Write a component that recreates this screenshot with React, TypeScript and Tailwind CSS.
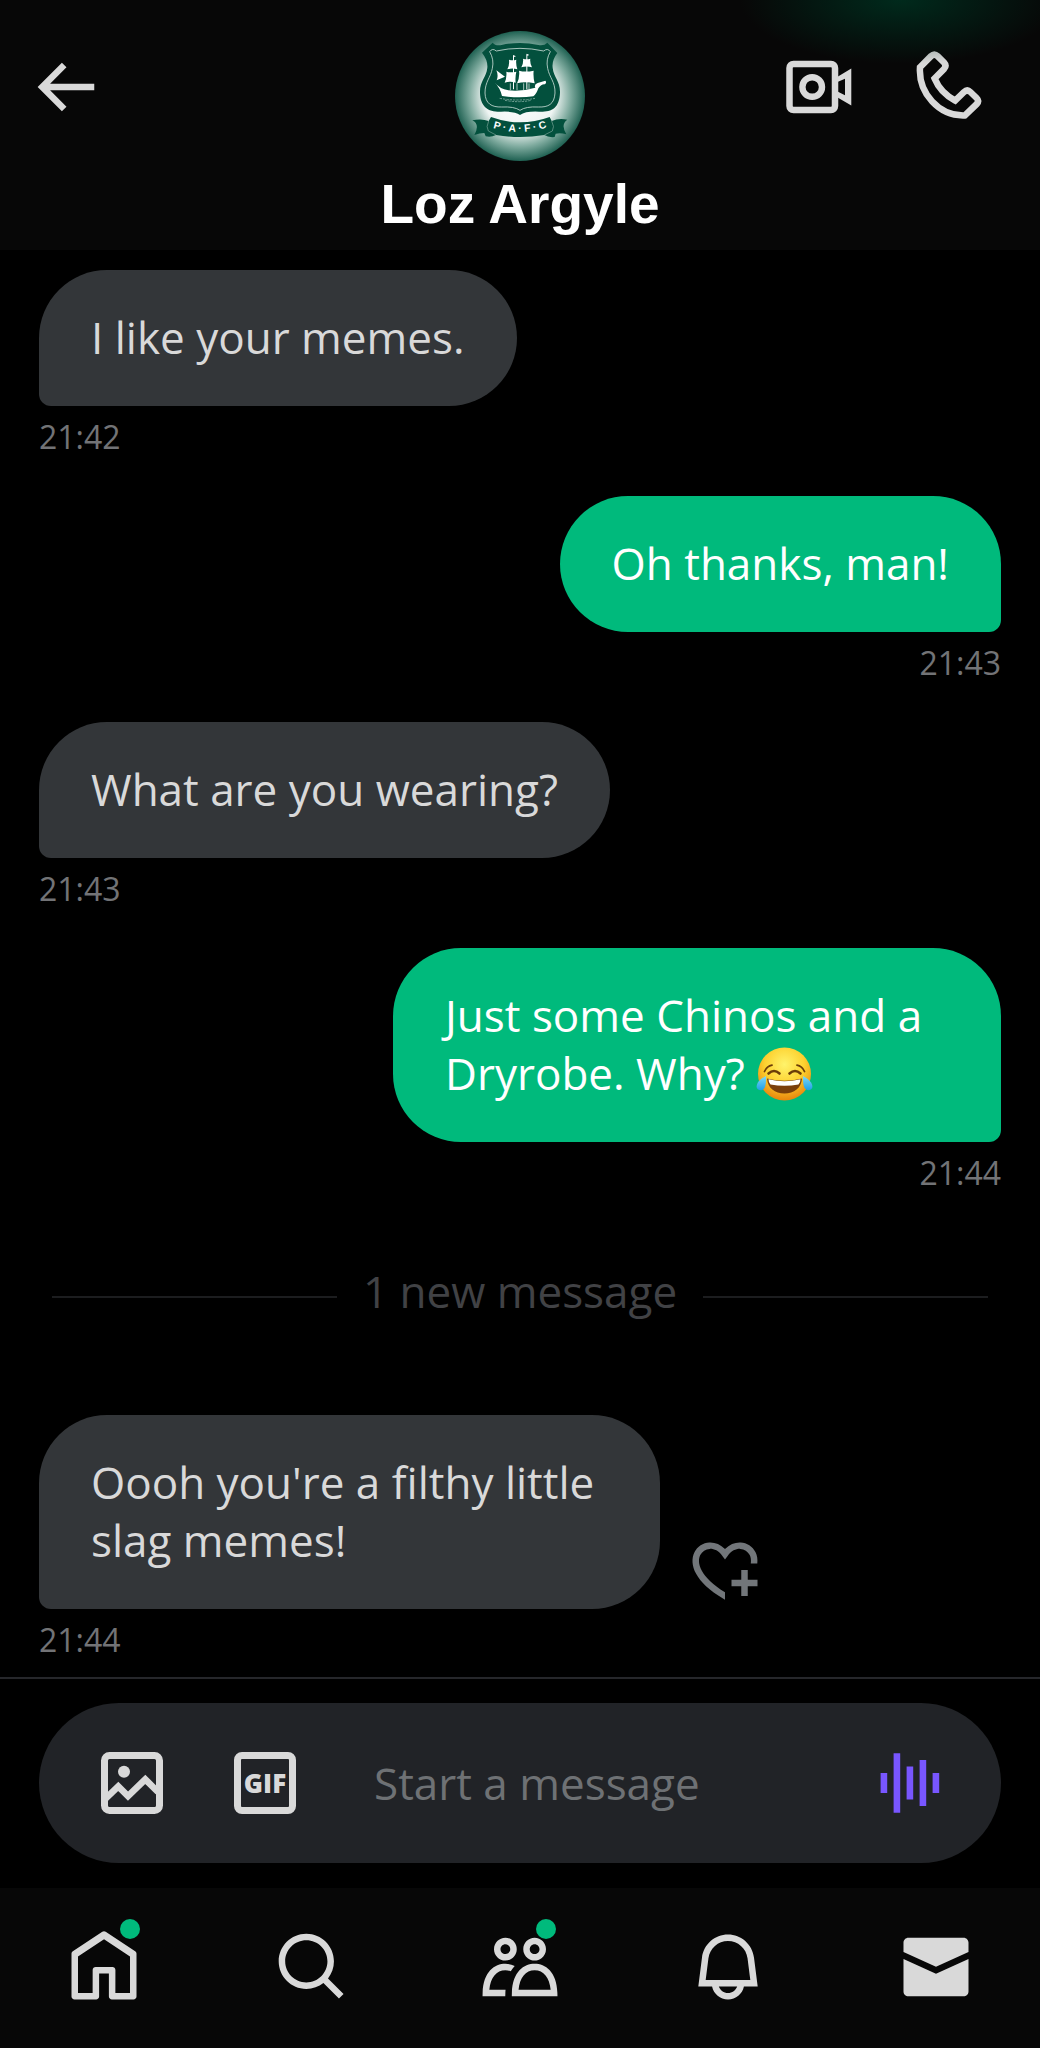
import type { ReactNode } from "react";

type Message = {
  id: number;
  mine: boolean;
  time: string;
  body: ReactNode;
  canReact?: boolean;
};

const BACK =
  "M7.414 13l5.043 5.04-1.414 1.42L3.586 12l7.457-7.46 1.414 1.42L7.414 11H21v2H7.414z";
const HEART_PLUS =
  "M17 12v3h-2.998v2H17v3h2v-3h3.001v-2H19v-3h-2zm-5 6.839c-3.871-2.34-6.053-4.639-7.127-6.609-1.112-2.04-1.031-3.7-.479-4.82.561-1.13 1.667-1.84 2.91-1.91 1.222-.06 2.68.51 3.892 2.16l.806 1.09.805-1.09c1.211-1.65 2.668-2.22 3.89-2.16 1.242.07 2.347.78 2.908 1.91.334.677.49 1.554.321 2.59h2.011c.153-1.283-.039-2.469-.539-3.48-.887-1.79-2.647-2.91-4.601-3.01-1.65-.09-3.367.56-4.796 2.01-1.43-1.45-3.147-2.1-4.798-2.01-1.954.1-3.714 1.22-4.601 3.01-.896 1.81-.846 4.17.514 6.67 1.353 2.48 4.003 5.12 8.382 7.67l.502.299v-2.32z";
const HOME =
  "M21.591 7.146L12.52 1.157c-.316-.21-.724-.21-1.04 0l-9.071 5.99c-.26.173-.409.456-.409.757v13.183c0 .502.418.913.929.913h6.638c.511 0 .929-.41.929-.913v-7.075h3.008v7.075c0 .502.418.913.929.913h6.639c.51 0 .928-.41.928-.913V7.904c0-.301-.158-.584-.408-.758zM20 20l-4.5.01.011-7.097c0-.502-.418-.913-.928-.913H9.44c-.511 0-.929.41-.929.913L8.5 20H4V8.773l8.011-5.342L20 8.764z";
const SEARCH =
  "M10.25 3.75c-3.59 0-6.5 2.91-6.5 6.5s2.91 6.5 6.5 6.5c1.795 0 3.419-.726 4.596-1.904 1.178-1.177 1.904-2.801 1.904-4.596 0-3.59-2.91-6.5-6.5-6.5zm-8.5 6.5c0-4.694 3.806-8.5 8.5-8.5s8.5 3.806 8.5 8.5c0 1.986-.682 3.815-1.824 5.262l4.781 4.781-1.414 1.414-4.781-4.781c-1.447 1.142-3.276 1.824-5.262 1.824-4.694 0-8.5-3.806-8.5-8.5z";
const PEOPLE =
  "M7.501 19.917L7.471 21H.472l.029-1.027c.184-6.618 3.736-8.977 7-8.977.963 0 1.95.212 2.87.672-.444.478-.851 1.03-1.212 1.656-.507-.204-1.054-.329-1.658-.329-2.767 0-4.57 2.223-4.938 6.004H7.56c-.023.302-.05.599-.059.918zm15.998.056L23.528 21H9.472l.029-1.027c.184-6.618 3.736-8.977 7-8.977s6.816 2.358 7 8.977zM21.437 19c-.367-3.781-2.17-6.004-4.938-6.004s-4.57 2.223-4.938 6.004h9.875zm-4.938-9c-.799 0-1.527-.279-2.116-.73-.836-.64-1.384-1.638-1.384-2.77 0-1.93 1.567-3.5 3.5-3.5s3.5 1.57 3.5 3.5c0 1.132-.548 2.13-1.384 2.77-.589.451-1.317.73-2.116.73zm-1.5-3.5c0 .827.673 1.5 1.5 1.5s1.5-.673 1.5-1.5-.673-1.5-1.5-1.5-1.5.673-1.5 1.5zM7.5 3C9.433 3 11 4.57 11 6.5S9.433 10 7.5 10 4 8.43 4 6.5 5.567 3 7.5 3zm0 2C6.673 5 6 5.673 6 6.5S6.673 8 7.5 8 9 7.327 9 6.5 8.327 5 7.5 5z";
const BELL =
  "M19.993 9.042C19.48 5.017 16.054 2 11.996 2s-7.49 3.021-7.999 7.051L2.866 18H7.1c.463 2.282 2.481 4 4.9 4s4.437-1.718 4.9-4h4.236l-1.143-8.958zM12 20c-1.306 0-2.417-.835-2.829-2h5.658c-.412 1.165-1.523 2-2.829 2zm-6.866-4l.847-6.698C6.364 6.272 8.941 4 11.996 4s5.627 2.268 6.013 5.295L18.864 16H5.134z";
const MAIL =
  "M1.998 4.499c0-.828.671-1.499 1.5-1.499h17c.828 0 1.5.671 1.5 1.499v2.858l-10 4.545-10-4.547V4.499zm0 5.053V19.5c0 .828.671 1.5 1.5 1.5h17c.828 0 1.5-.672 1.5-1.5V9.554l-10 4.545-10-4.547z";

const NAV = [
  { label: "Home", path: HOME, dot: true },
  { label: "Search", path: SEARCH, dot: false },
  { label: "Communities", path: PEOPLE, dot: true },
  { label: "Notifications", path: BELL, dot: false },
  { label: "Messages", path: MAIL, dot: false },
];

function Icon({ path }: { path: string }) {
  return (
    <svg viewBox="0 0 24 24" className="size-[78px] shrink-0" fill="currentColor" aria-hidden="true">
      <path d={path} />
    </svg>
  );
}

function VideoIcon() {
  return (
    <svg viewBox="0 -3 66 57" className="h-[57px] w-[66px]" fill="none" stroke="currentColor" aria-hidden="true">
      <rect x="3.5" y="4" width="45.5" height="46" rx="4" strokeWidth="6.5" />
      <circle cx="26.2" cy="27" r="9.8" strokeWidth="6.4" />
      <path
        d="M52 16.4 65.3 8.6v37L52 37.8v-6l7 3.5V18.8l-7 3z"
        fill="currentColor"
        stroke="none"
      />
    </svg>
  );
}

function PhoneIcon() {
  return (
    <svg viewBox="0 0 66 70" className="h-[70px] w-[66px]" fill="none" stroke="currentColor" aria-hidden="true">
      <path
        d="M4 17.2 15 6.1Q18.3 3 21.6 6.1L28 12.5Q31 15.8 28 19L18.6 28.6Q24.5 43 39.2 50.6L48 42Q51.2 39 54.4 42L60.6 48Q63.6 51 60.6 54.2L49 65.4C23 66.5 2.2 43 4 17.2Z"
        strokeWidth="6.5"
      />
    </svg>
  );
}

function PictureIcon() {
  return (
    <svg viewBox="0 0 62 62" className="size-[62px]" fill="none" stroke="currentColor" aria-hidden="true">
      <rect x="3.5" y="3.5" width="55" height="55" rx="5" strokeWidth="7" />
      <circle cx="23" cy="19.7" r="6" fill="currentColor" stroke="none" />
      <path d="M4 47.2 17.3 34.3 27 44 44.3 27.3 57 40" strokeWidth="6.6" />
    </svg>
  );
}

function VoiceIcon() {
  return (
    <svg viewBox="0 0 60 60" className="size-[60px]" fill="currentColor" aria-hidden="true">
      <path d="M.6 20h6.6v20H.6zM13.6.3h6.6v59.4h-6.6zM26.6 13.5h6.6v33h-6.6zM39.6 7h6.6v46h-6.6zM52.6 20h6.6v20h-6.6z" />
    </svg>
  );
}

function JoyEmoji() {
  return (
    <svg
      viewBox="0 0 57 54"
      className="inline-block h-[54px] w-[57px] align-[-11px]"
      role="img"
      aria-label="face with tears of joy"
    >
      <defs>
        <radialGradient id="joy-face" cx="50%" cy="32%" r="68%">
          <stop offset="0" stopColor="#fff36b" />
          <stop offset=".55" stopColor="#fdd12f" />
          <stop offset="1" stopColor="#e8850c" />
        </radialGradient>
        <linearGradient id="joy-tear" x1="0" y1="0" x2="0" y2="1">
          <stop offset="0" stopColor="#7fd8f7" />
          <stop offset="1" stopColor="#1f9fe6" />
        </linearGradient>
      </defs>
      <circle cx="28.5" cy="27" r="26.5" fill="url(#joy-face)" />
      <g fill="none" stroke="#6b3d08" strokeLinecap="round">
        <path d="M8.5 24.5Q11 19 16 18.2M48.5 24.5Q46 19 41 18.2" strokeWidth="1.8" />
        <path d="M12.5 26.5Q18 21.5 23.5 26.5M33.5 26.5Q39 21.5 44.5 26.5" strokeWidth="2.6" />
      </g>
      <path d="M11 31.5Q28.5 36 46 31.5C45.5 41 38 46.5 28.5 46.5S11.500 41 11 31.500Z" fill="#7a3f0b" />
      <path d="M12.5 32.2Q28.5 36.5 44.5 32.2Q44.5 36 42.5 37.5Q28.5 40 14.5 37.5Q12.5 36 12.5 32.2Z" fill="#fff" />
      <path d="M10 29C4 32 .5 36 .6 40c.2 3.6 6 4.6 8 .8C10 37.5 10.2 33 10 29Z" fill="url(#joy-tear)" />
      <path d="M47 29c6 3 9.5 7 9.4 11-.2 3.6-6 4.6-8 .8C47 37.5 46.8 33 47 29Z" fill="url(#joy-tear)" />
    </svg>
  );
}

function Crest() {
  return (
    <svg viewBox="0 0 390 390" className="size-[130px] rounded-full" role="img" aria-label="Loz Argyle">
      <defs>
        <radialGradient id="crest-glow" cx="50%" cy="50%" r="50%">
          <stop offset="0" stopColor="#fff" />
          <stop offset=".55" stopColor="#eef4f2" />
          <stop offset=".78" stopColor="#7fab9f" />
          <stop offset="1" stopColor="#1f6152" />
        </radialGradient>
        <path id="crest-motto" d="M100 286Q195 320 290 284" />
      </defs>
      <rect width="390" height="390" fill="url(#crest-glow)" />
      <path
        d="M81 65 113 35Q120 45 140 42Q195 30 250 42Q268 45 277 35L307 66Q290 88 293 110C296 140 316 150 315 185C313 232 290 243 252 242Q212 240 195 252Q178 240 138 242C100 243 76 228 75 185C74 150 94 140 97 110Q99 88 81 65Z"
        fill="#03503d"
      />
      <path
        d="M104 62Q112 50 124 60Q195 44 266 60Q278 50 286 62Q272 86 278 112C283 140 301 152 300 186C298 220 280 229 250 228Q212 226 195 238Q178 226 140 228C110 229 91 218 90 186C90 152 107 140 112 112Q118 86 104 62Z"
        fill="none"
        stroke="#c9dcd6"
        strokeWidth="2.5"
      />
      <g fill="#fff">
        <path d="M162 86Q174 90 184 86Q182 100 187 115Q172 110 157 115Q164 102 162 86ZM204 83Q215 87 226 83Q224 96 231 109Q215 104 199 109Q206 97 204 83Z" />
        <path d="M154 122Q168 126 184 122Q180 138 182 155Q166 149 149 155Q156 140 154 122ZM192 119Q212 124 236 119Q234 138 239 157Q210 150 186 157Q195 138 192 119ZM124 118L150 137L125 148Q131 133 124 118Z" />
        <path d="M118 153Q134 174 160 178Q200 182 241 170Q236 160 248 156L271 149Q276 154 270 160Q260 158 250 172Q244 190 235 196Q190 202 141 195Q136 172 118 153Z" />
        <path d="M174 73h3v102h-3zM214 70h3v105h-3zM175 72l8 4-8 3zM215 68l8 4-8 3z" />
      </g>
      <path d="M166 157v20M186 157v20M206 157v20M222 157v18" stroke="#a9c5bd" strokeWidth="3" />
      <path d="M134 202Q190 212 240 202M150 208Q190 216 228 208" stroke="#6f9f92" strokeWidth="3" fill="none" strokeDasharray="7 3" />
      <path
        d="M52 268Q80 262 101 270L108 258Q195 290 284 258L290 270Q312 260 337 266Q316 280 334 310Q316 304 302 308L299 318Q280 320 268 312Q195 324 123 312Q108 320 92 316L88 306Q74 306 58 312Q76 280 52 268Z"
        fill="#03503d"
      />
      <path d="M101 270Q92 288 100 300L123 312M290 270Q300 288 292 300L268 312" fill="none" stroke="#7fa89c" strokeWidth="2" />
      <text fill="#fff" fontFamily="Liberation Sans, sans-serif" fontWeight="700" fontSize="31" textAnchor="middle">
        <textPath href="#crest-motto" startOffset="50%">
          P · A · F · C
        </textPath>
      </text>
    </svg>
  );
}

function Bubble({ message }: { message: Message }) {
  const { mine, time, body, canReact } = message;
  return (
    <li className={mine ? "flex flex-col items-end" : "flex flex-col items-start"}>
      <div className="flex items-end gap-[26px]">
        <p
          className={
            mine
              ? "max-w-[608px] rounded-[68px] rounded-br-[12px] bg-[#00ba7c] px-[52px] pt-[38px] pb-10 text-white"
              : "max-w-[621px] rounded-[68px] rounded-bl-[12px] bg-[#333639] px-[52px] pt-[38px] pb-10"
          }
        >
          {body}
        </p>
        {canReact ? (
          <button type="button" aria-label="Add reaction" className="text-[#72767a]">
            <Icon path={HEART_PLUS} />
          </button>
        ) : null}
      </div>
      <time className="pt-[11px] pb-px text-[32px] leading-10 text-[#727376]">{time}</time>
    </li>
  );
}

const read: Message[] = [
  { id: 1, mine: false, time: "21:42", body: "I like your memes." },
  { id: 2, mine: true, time: "21:43", body: "Oh thanks, man!" },
  { id: 3, mine: false, time: "21:43", body: "What are you wearing?" },
  {
    id: 4,
    mine: true,
    time: "21:44",
    body: (
      <>
        Just some Chinos and a Dryrobe. Why? <JoyEmoji />
      </>
    ),
  },
];

const unread: Message[] = [
  { id: 5, mine: false, time: "21:44", body: "Oooh you're a filthy little slag memes!", canReact: true },
];

export default function App() {
  return (
    <div className="flex min-h-screen flex-col bg-black font-['Open_Sans',sans-serif] text-[44px] leading-[58px] text-[#d9d9d9]">
      <header className="relative grid grid-cols-[1fr_auto_1fr] items-start overflow-hidden bg-[#070707] px-[26px] pb-[14px]">
        <div className="pointer-events-none absolute -top-16 -right-5 h-32 w-[320px] bg-[radial-gradient(closest-side,#002a1c,transparent)]" />
        <button type="button" aria-label="Back" className="mt-12 justify-self-start">
          <Icon path={BACK} />
        </button>
        <div className="flex flex-col items-center pt-[31px]">
          <Crest />
          <h1 className="mt-3 font-['Liberation_Sans',sans-serif] text-[55px] leading-[63px] font-bold text-white">
            Loz Argyle
          </h1>
        </div>
        <div className="mt-[50px] mr-8 flex items-center gap-16 justify-self-end">
          <button type="button" aria-label="Video call">
            <VideoIcon />
          </button>
          <button type="button" aria-label="Voice call">
            <PhoneIcon />
          </button>
        </div>
      </header>

      <main className="flex-1 px-[39px] pt-5 pb-4">
        <ul className="flex flex-col gap-[38px]">
          {read.map((m) => (
            <Bubble key={m.id} message={m} />
          ))}
          <li className="flex items-center gap-[26px] px-[13px] pt-[30px] pb-[57px] text-[#414245]">
            <span className="mt-3 h-[2px] flex-1 bg-[#1c1d1f]" />
            1 new message
            <span className="mt-3 h-[2px] flex-1 bg-[#1c1d1f]" />
          </li>
          {unread.map((m) => (
            <Bubble key={m.id} message={m} />
          ))}
        </ul>
      </main>

      <form
        className="border-t-2 border-[#26272b] px-[39px] pt-6 pb-[25px]"
        onSubmit={(e) => e.preventDefault()}
      >
        <div className="flex h-40 items-center rounded-full bg-[#212327] pr-[61px] pl-[62px]">
          <button type="button" aria-label="Add a photo">
            <PictureIcon />
          </button>
          <button
            type="button"
            aria-label="Add a GIF"
            className="ml-[71px] flex size-[62px] items-center justify-center rounded-lg border-[7px] border-current text-[26px] leading-none font-extrabold"
          >
            GIF
          </button>
          <input
            type="text"
            aria-label="Start a message"
            placeholder="Start a message"
            className="mr-4 ml-[78px] min-w-0 flex-1 bg-transparent outline-none placeholder:text-[#6e7174]"
          />
          <button type="button" aria-label="Record a voice message" className="text-[#7856ff]">
            <VoiceIcon />
          </button>
        </div>
      </form>

      <nav className="grid grid-cols-5 bg-[#070707] pt-10 pb-[42px]">
        {NAV.map((item) => (
          <a key={item.label} href="#" aria-label={item.label} className="relative justify-self-center">
            <Icon path={item.path} />
            {item.dot ? (
              <span className="absolute -top-[9px] left-[55px] size-5 rounded-full bg-[#00ba7c]" />
            ) : null}
          </a>
        ))}
      </nav>
    </div>
  );
}
